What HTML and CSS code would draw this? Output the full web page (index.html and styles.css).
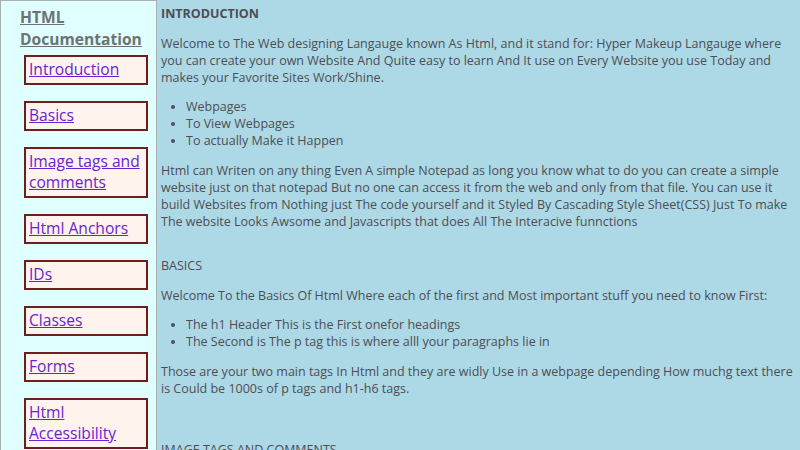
FILE: index.html
```html
<!DOCTYPE html>
<html lang="en">
<head>
<meta charset="utf-8">
<title>HTML Documentation</title>
<link rel="stylesheet" href="styles.css">
</head>
<body>
<nav class="navbar" id="navbar">
  <header class="nav-title"><a href="#">HTML Documentation</a></header>
  <ul class="nav-list">
    <li class="nav-item"><a class="nav-link" href="#Introduction">Introduction</a></li>
    <li class="nav-item"><a class="nav-link" href="#Basics">Basics</a></li>
    <li class="nav-item"><a class="nav-link" href="#Image_tags_and_comments">Image tags and comments</a></li>
    <li class="nav-item"><a class="nav-link" href="#Html_Anchors">Html Anchors</a></li>
    <li class="nav-item"><a class="nav-link" href="#IDs">IDs</a></li>
    <li class="nav-item"><a class="nav-link" href="#Classes">Classes</a></li>
    <li class="nav-item"><a class="nav-link" href="#Forms">Forms</a></li>
    <li class="nav-item"><a class="nav-link" href="#Html_Accessibility">Html Accessibility</a></li>
  </ul>
</nav>
<main class="main-doc" id="main-doc">
  <section class="main-section intro" id="Introduction">
    <header class="sec-title strong">INTRODUCTION</header>
    <p>Welcome to The Web designing Langauge known As Html, and it stand for: Hyper Makeup Langauge where you can create your own Website And Quite easy to learn And It use on Every Website you use Today and makes your Favorite Sites Work/Shine.</p>
    <ul>
      <li>Webpages</li>
      <li>To View Webpages</li>
      <li>To actually Make it Happen</li>
    </ul>
    <p>Html can Writen on any thing Even A simple Notepad as long you know what to do you can create a simple website just on that notepad But no one can access it from the web and only from that file. You can use it build Websites from Nothing just The code yourself and it Styled By Cascading Style Sheet(CSS) Just To make The website Looks Awsome and Javascripts that does All The Interacive funnctions</p>
  </section>
  <section class="main-section basics" id="Basics">
    <header class="sec-title">BASICS</header>
    <p>Welcome To the Basics Of Html Where each of the first and Most important stuff you need to know First:</p>
    <ul>
      <li>The h1 Header This is the First onefor headings</li>
      <li>The Second is The p tag this is where alll your paragraphs lie in</li>
    </ul>
    <p>Those are your two main tags In Html and they are widly Use in a webpage depending How muchg text there is Could be 1000s of p tags and h1-h6 tags.</p>
  </section>
  <section class="main-section" id="Image_tags_and_comments">
    <header class="sec-title">IMAGE TAGS AND COMMENTS</header>
    <p>Images are added with the img tag and comments are written between the comment markers so the browser does not show them.</p>
  </section>
</main>
</body>
</html>
```

FILE: styles.css
```css
html, body {
  margin: 0;
  padding: 0;
}
body {
  display: flex;
  align-items: flex-start;
  font-family: "Open Sans", "Noto Sans", sans-serif;
  background: #add8e6;
  color: #4d4e53;
  height: 450px;
  overflow: hidden;
}
.navbar {
  flex: 0 0 157px;
  height: 470px;
  background: #e0ffff;
  border: 1px solid #a9b0b0;
  box-sizing: border-box;
}
.nav-title {
  padding: 5px 0 0 19px;
  font-size: 15.6px;
  font-weight: 700;
  line-height: 22px;
}
.nav-title a {
  color: #6e7272;
}
.nav-list {
  list-style: none;
  margin: 5px 0 0;
  padding: 0 0 0 23px;
}
.nav-item {
  width: 124px;
  box-sizing: border-box;
  border: 2px solid #6f1e1e;
  background: #fff3ee;
  padding: 2px 2px 3px 3px;
  margin-bottom: 16px;
  font-size: 15.6px;
  line-height: 21px;
}
.nav-link {
  color: #6a22cf;
}
.main-doc {
  flex: 1;
  padding: 5px 1px 0 4px;
  font-size: 12.5px;
  line-height: 17px;
}
.sec-title {
  font-size: 12.5px;
}
.sec-title.strong {
  font-weight: 700;
}
.main-doc p {
  margin: 12.5px 0;
}
.main-doc ul {
  margin: 12px 0;
  padding-left: 25px;
}
.intro {
  padding-bottom: 15px;
}
.basics {
  padding-bottom: 32px;
}
```
